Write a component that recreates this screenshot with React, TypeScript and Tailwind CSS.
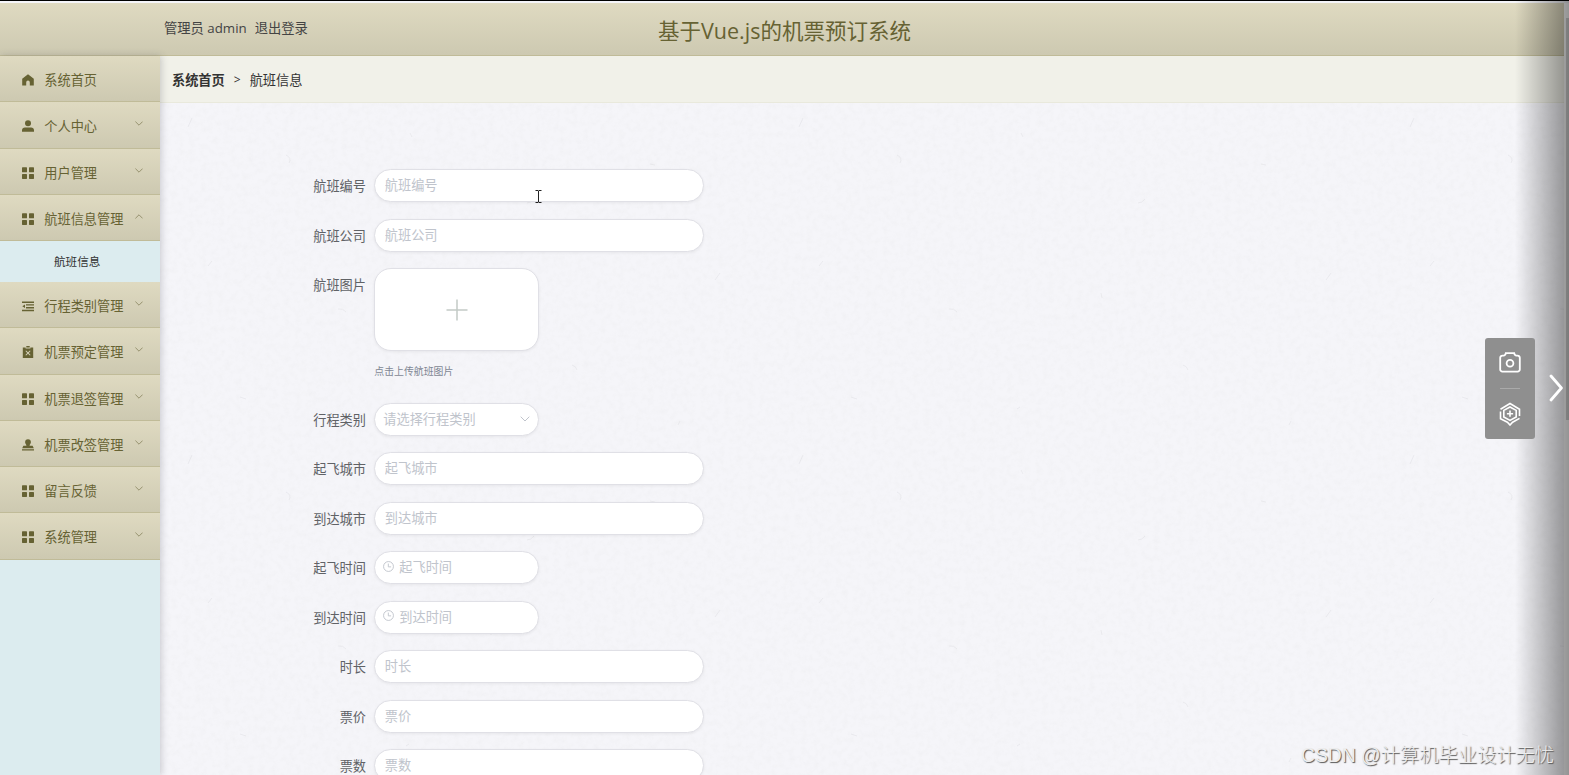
import type { ReactNode } from "react";

const HomeIcon = () => (
  <svg viewBox="0 0 12 12" className="h-3 w-3" fill="currentColor">
    <path d="M6 0.3 L11.8 4.8 V11.6 H7.8 V8.4 a1.8 1.8 0 0 0 -3.6 0 V11.6 H0.2 V4.8 Z" />
  </svg>
);

const UserIcon = () => (
  <svg viewBox="0 0 12 12" className="h-3 w-3" fill="currentColor">
    <circle cx="6" cy="3.2" r="3" />
    <path d="M0 11.8 V10.3 A3 3 0 0 1 3 7.5 H9 A3 3 0 0 1 12 10.3 V11.8 Z" />
  </svg>
);

const MenuIcon = () => (
  <svg viewBox="0 0 12 12" className="h-3 w-3" fill="currentColor">
    <rect x="0" y="0.3" width="5" height="5" rx="0.6" />
    <rect x="7" y="0.3" width="5" height="5" rx="0.6" />
    <rect x="0" y="6.9" width="5" height="5" rx="0.6" />
    <rect x="7" y="6.9" width="5" height="5" rx="0.6" />
  </svg>
);

const FoldIcon = () => (
  <svg viewBox="0 0 12 12" className="h-3 w-3" fill="currentColor">
    <path d="M0 1.4 H12 V3 H0 Z M4 4.2 H12 V5.6 H4 Z M4 7 H12 V8.4 H4 Z M0 9.7 H12 V11.2 H0 Z M0.3 6.2 L3 4.4 V8 Z" />
  </svg>
);

const ReleaseIcon = () => (
  <svg viewBox="0 0 12 12" className="h-3 w-3" fill="currentColor">
    <path
      fillRule="evenodd"
      d="M0.8 1.4 H3.6 V2.4 H8.4 V1.4 H11.2 V12 H0.8 Z M4.1 4.4 L3.4 5.1 L5.3 7 L3.4 8.9 L4.1 9.6 L6 7.7 L7.9 9.6 L8.6 8.9 L6.7 7 L8.6 5.1 L7.9 4.4 L6 6.3 Z"
    />
    <path d="M4.3 0 H7.7 V1.5 H4.3 Z" />
  </svg>
);

const StampIcon = () => (
  <svg viewBox="0 0 12 12" className="h-3 w-3" fill="currentColor">
    <path d="M6 0.3 A2.9 2.9 0 0 1 8.9 3.2 C8.9 4.6 7.6 5.2 7.6 6.8 H10.6 L11.8 9.2 H0.2 L1.4 6.8 H4.4 C4.4 5.2 3.1 4.6 3.1 3.2 A2.9 2.9 0 0 1 6 0.3 Z M0 10.3 H12 V11.4 H0 Z" />
  </svg>
);

const Chevron = ({ up = false }: { up?: boolean }) => (
  <svg
    viewBox="0 0 8 5"
    className={up ? "h-[5px] w-2 rotate-180" : "h-[5px] w-2"}
    fill="none"
    stroke="currentColor"
    strokeWidth="0.9"
  >
    <path d="M0.4 0.6 L4 4.2 L7.6 0.6" />
  </svg>
);

const ClockIcon = () => (
  <svg viewBox="0 0 12 12" className="h-[11px] w-[11px]" fill="none" stroke="currentColor" strokeWidth="1">
    <circle cx="6" cy="6" r="5.4" />
    <path d="M5.8 2.8 V6.4 H8.8" />
  </svg>
);

interface MenuEntry {
  label: string;
  icon: ReactNode;
  arrow?: "up" | "down";
  children?: string[];
}

const menu: MenuEntry[] = [
  { label: "系统首页", icon: <HomeIcon /> },
  { label: "个人中心", icon: <UserIcon />, arrow: "down" },
  { label: "用户管理", icon: <MenuIcon />, arrow: "down" },
  { label: "航班信息管理", icon: <MenuIcon />, arrow: "up", children: ["航班信息"] },
  { label: "行程类别管理", icon: <FoldIcon />, arrow: "down" },
  { label: "机票预定管理", icon: <ReleaseIcon />, arrow: "down" },
  { label: "机票退签管理", icon: <MenuIcon />, arrow: "down" },
  { label: "机票改签管理", icon: <StampIcon />, arrow: "down" },
  { label: "留言反馈", icon: <MenuIcon />, arrow: "down" },
  { label: "系统管理", icon: <MenuIcon />, arrow: "down" },
];

type FieldType = "text" | "upload" | "select" | "time";

const fields: { label: string; type: FieldType }[] = [
  { label: "航班编号", type: "text" },
  { label: "航班公司", type: "text" },
  { label: "航班图片", type: "upload" },
  { label: "行程类别", type: "select" },
  { label: "起飞城市", type: "text" },
  { label: "到达城市", type: "text" },
  { label: "起飞时间", type: "time" },
  { label: "到达时间", type: "time" },
  { label: "时长", type: "text" },
  { label: "票价", type: "text" },
  { label: "票数", type: "text" },
];

const box = "border border-[#e0e0e6] bg-white shadow-[0_1px_3px_rgba(0,0,0,0.06)]";

function Field({ label, type }: { label: string; type: FieldType }) {
  if (type === "upload") {
    return (
      <div className="h-[118.2px]">
        <div className={`flex h-[82.5px] w-[165px] items-center justify-center rounded-[17px] ${box}`}>
          <svg viewBox="0 0 22 22" className="h-[22px] w-[22px]" stroke="#c3cac6" strokeWidth="1.5">
            <path d="M11 0.5 V21.5 M0.5 11 H21.5" />
          </svg>
        </div>
        <p className="mt-[13.5px] text-[9.9px] leading-[14px] text-[#7f8794]">点击上传{label}</p>
      </div>
    );
  }
  if (type === "select") {
    return (
      <div className={`flex h-[33px] w-[165px] items-center justify-between rounded-full pr-[8px] pl-2 text-[#c0c4cc] ${box}`}>
        <span className="-mt-px">请选择{label}</span>
        <svg viewBox="0 0 10 6" className="h-[6px] w-[10px]" fill="none" stroke="currentColor">
          <path d="M0.7 0.7 L5 5 L9.3 0.7" />
        </svg>
      </div>
    );
  }
  if (type === "time") {
    return (
      <div className={`flex h-[33px] w-[165px] items-center gap-[5px] rounded-full pl-2 text-[#c0c4cc] ${box}`}>
        <span className="-mt-[3px]">
          <ClockIcon />
        </span>
        <span className="-mt-px">{label}</span>
      </div>
    );
  }
  return (
    <input
      className={`h-[33px] w-[330px] rounded-full px-[9.5px] pb-px outline-none placeholder:text-[#c0c4cc] ${box}`}
      placeholder={label}
    />
  );
}

function Sidebar() {
  return (
    <aside className="z-10 w-[160px] shrink-0 bg-[#dcecef] shadow-[1px_0_7px_rgba(60,60,70,0.25)]">
      {menu.map((item) => (
        <div key={item.label}>
          <div className="flex h-[46.25px] items-center border-b border-[#c0bb98] bg-gradient-to-b from-[#dfdac1] to-[#cdc9b1] pt-[3px] pl-[22px] text-[#666233]">
            {item.icon}
            <span className="ml-[10.3px] whitespace-nowrap">{item.label}</span>
            {item.arrow && (
              <span className="mr-[17.5px] mb-[5px] ml-auto text-[#8f8b66]">
                <Chevron up={item.arrow === "up"} />
              </span>
            )}
          </div>
          {item.children?.map((child) => (
            <div key={child} className="flex h-[41px] items-center pt-px pl-[54px] text-[11.6px] text-[#333]">
              {child}
            </div>
          ))}
        </div>
      ))}
    </aside>
  );
}

// faint paper grain with a few darker fibres
function PaperTexture() {
  return (
    <svg className="absolute inset-0 h-full w-full" aria-hidden="true">
      <filter id="paper" x="0" y="0" width="100%" height="100%">
        <feTurbulence type="fractalNoise" baseFrequency="0.17" numOctaves="4" seed="8" />
        <feColorMatrix values="0 0 0 0 0.5  0 0 0 0 0.5  0 0 0 0 0.47  0.5 0 0 0 -0.2" />
      </filter>
      <pattern id="fibres" width="611" height="337" patternUnits="userSpaceOnUse">
        <g fill="none" stroke="#c9c9cf" strokeWidth="0.6" opacity="0.45">
          <path d="M28 24 l4 -9 M126 52 q6 3 3 8 M250 30 l2 4 M374 96 q-3 4 -7 4 M490 61 l5 1 M52 158 l-4 5 M178 206 q5 -1 8 3 M330 190 l1 5 M560 170 l-5 7 M80 294 l6 2 M246 306 l3 -2 M412 262 q4 1 5 5 M520 318 l-2 4" />
        </g>
      </pattern>
      <rect width="100%" height="100%" filter="url(#paper)" opacity="0.25" />
      <rect width="100%" height="100%" fill="url(#fibres)" />
    </svg>
  );
}

function CaptureTools() {
  return (
    <div className="absolute top-[337px] left-[1485px] flex h-[101px] w-[50px] flex-col items-center rounded-[3px] bg-[#8f8f8f] pt-[14px] text-white">
      <svg viewBox="0 0 22 21" className="h-[21px] w-[22px]" fill="none" stroke="currentColor" strokeWidth="1.8">
        <path d="M4.6 3.6 Q6.4 3.6 6.8 1.2 H15.2 Q15.6 3.6 17.4 3.6 H18.6 A2.2 2.2 0 0 1 20.8 5.8 V17.4 A2.2 2.2 0 0 1 18.6 19.6 H3.4 A2.2 2.2 0 0 1 1.2 17.4 V5.8 A2.2 2.2 0 0 1 3.4 3.6 Z" />
        <circle cx="11" cy="11.3" r="3.4" />
      </svg>
      <div className="mt-[15px] h-px w-5 bg-[#aaa]" />
      <svg viewBox="0 0 22 24" className="mt-[13px] h-6 w-[22px]" fill="none" stroke="currentColor" strokeWidth="1.6">
        <path d="M1.5 7.2 L11 1.5 L20.5 7.2 V14 M1.5 9.5 V16.8 L8.4 20.2 L11 23 L13.6 20.2 L20.5 16.4" />
        <path d="M11 5 L17.2 8.4 V15 L11 18.4 L4.8 15 V8.4 Z" />
        <path d="M11 8.6 V14.8 M7.9 11.7 H14.1" />
      </svg>
    </div>
  );
}

export default function App() {
  return (
    <div className="relative flex h-[775px] w-[1569px] flex-col overflow-hidden border-t border-black bg-[#f5f5f9] pt-[2px] font-['Open_Sans','Noto_Sans_CJK_SC',sans-serif] text-[13.2px] leading-5">
      <header className="flex h-[53px] shrink-0 items-center border-b border-[#c0bb98] bg-gradient-to-b from-[#dfdac1] to-[#cdc9b1]">
        <div className="flex-1">
          <div className="ml-[164px] flex gap-2 pb-[3px] text-[13.3px] text-[#444]">
            <span>管理员 admin</span>
            <span>退出登录</span>
          </div>
        </div>
        <h1 className="pt-[3px] text-[21.5px] leading-7 text-[#666233]">基于Vue.js的机票预订系统</h1>
        <div className="flex-1" />
      </header>

      <div className="flex min-h-0 flex-1">
        <Sidebar />
        <main className="flex min-w-0 flex-1 flex-col">
          <nav className="flex h-[47px] shrink-0 items-center border-b border-[#e9e9dc] bg-[#f1f1e9] pt-px pl-[12px] text-[#333]">
            <span className="font-bold">系统首页</span>
            <span className="mx-[9px] text-[12px]">&gt;</span>
            <span>航班信息</span>
          </nav>
          <div className="relative flex-1 overflow-hidden">
            <PaperTexture />
            <form className="relative flex flex-col gap-[16.5px] pt-[66.3px]">
              {fields.map((f) => (
                <div key={f.label} className="flex items-start">
                  <label className="w-[206px] pt-[7px] text-right text-[#606266]">{f.label}</label>
                  <div className="ml-[8.3px] flex">
                    <Field label={f.label} type={f.type} />
                  </div>
                </div>
              ))}
            </form>
          </div>
        </main>
      </div>

      {/* page scrollbar */}
      <div className="absolute top-[2px] right-0 bottom-0 w-[5px] bg-white">
        <div className="mt-[15px] ml-[2px] h-[402px] w-[3px] bg-[#d4d4d4]" />
      </div>
      <div className="absolute top-0 right-0 bottom-0 w-[54px] bg-gradient-to-r from-transparent to-black/42" />
      <CaptureTools />
      <svg
        viewBox="0 0 14 28"
        className="absolute top-[373px] left-[1549px] h-7 w-[14px]"
        fill="none"
        stroke="#fff"
        strokeWidth="2.8"
        strokeLinecap="round"
        strokeLinejoin="round"
      >
        <path d="M2 2 L12.4 14 L2 26" />
      </svg>

      {/* text cursor */}
      <svg viewBox="0 0 7 13" className="absolute top-[189px] left-[535px] h-[13px] w-[7px]" fill="none" stroke="#222">
        <path d="M0.5 0.5 H3 M4 0.5 H6.5 M3.5 0.5 V12.5 M0.5 12.5 H3 M4 12.5 H6.5" />
      </svg>

      <p className="absolute top-[741px] left-[1301px] font-['Liberation_Sans','Noto_Sans_CJK_SC',sans-serif] text-[19.3px] leading-7 font-light whitespace-nowrap text-[#eee] [text-shadow:1px_1px_1px_#555]">
        CSDN @计算机毕业设计无忧
      </p>
    </div>
  );
}
